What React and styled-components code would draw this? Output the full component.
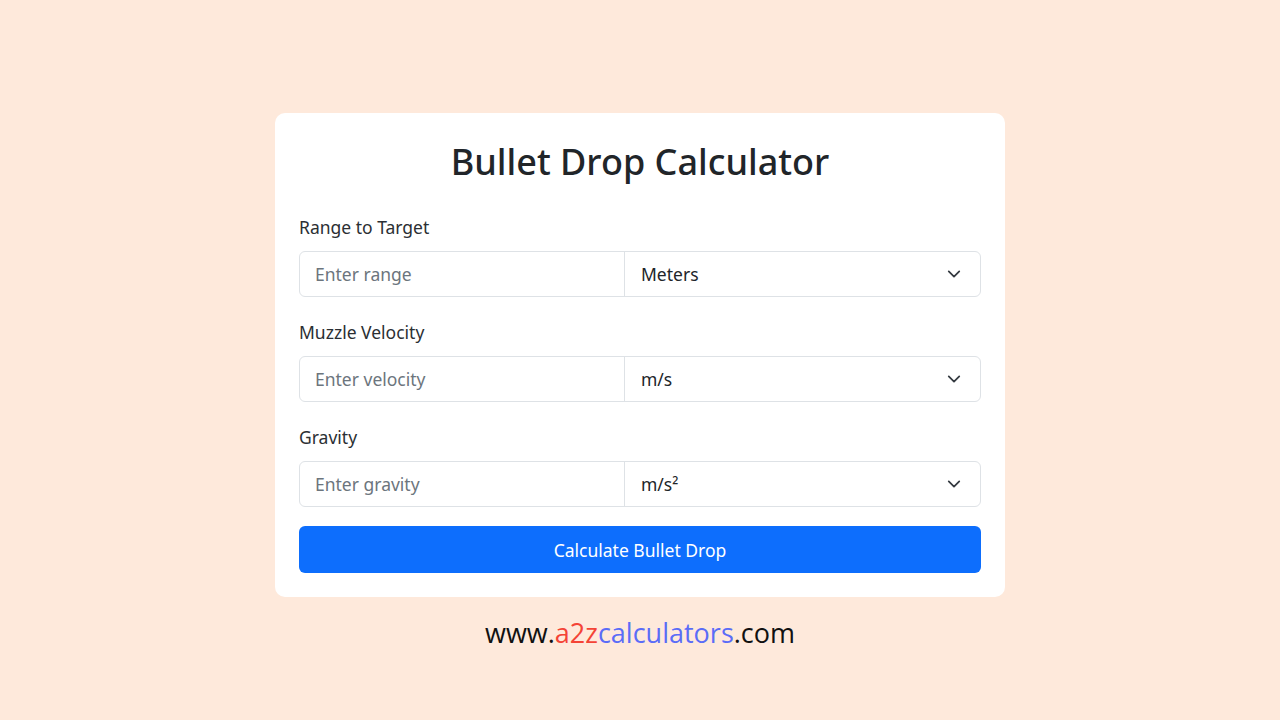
import React from 'react';
import styled, { createGlobalStyle } from 'styled-components';

const GlobalStyle = createGlobalStyle`
  * { box-sizing: border-box; }
  body {
    margin: 0;
    background: #fee9db;
    font-family: "Noto Sans", "Open Sans", sans-serif;
    color: #212529;
  }
`;

const fields = [
  { label: 'Range to Target', placeholder: 'Enter range', unit: 'Meters' },
  { label: 'Muzzle Velocity', placeholder: 'Enter velocity', unit: 'm/s' },
  { label: 'Gravity', placeholder: 'Enter gravity', unit: 'm/s²' },
];

const Chevron = () => (
  <svg width="14" height="14" viewBox="0 0 16 16" fill="none">
    <path d="M2 5l6 6 6-6" stroke="#343a40" strokeWidth="2" strokeLinecap="round" strokeLinejoin="round" />
  </svg>
);

const App = () => {
  return (
    <Page>
      <GlobalStyle />
      <Card>
        <Heading>Bullet Drop Calculator</Heading>
        {fields.map((item, index) => (
          <Field key={index}>
            <Label>{item.label}</Label>
            <Group>
              <Input placeholder={item.placeholder} />
              <Select>
                <span>{item.unit}</span>
                <Chevron />
              </Select>
            </Group>
          </Field>
        ))}
        <Button>Calculate Bullet Drop</Button>
      </Card>
      <Footer>
        www.<Red>a2z</Red><Blue>calculators</Blue>.com
      </Footer>
    </Page>
  );
};

export default App;

const Page = styled.div`
  width: 100%;
  height: 720px;
  display: flex;
  flex-direction: column;
  align-items: center;
  padding-top: 113px;
`;

const Card = styled.div`
  width: 730px;
  background: #fff;
  border-radius: 10px;
  padding: 24px;
  display: flex;
  flex-direction: column;
`;

const Heading = styled.h2`
  margin: 2px 0 29px;
  text-align: center;
  font-size: 36px;
  font-weight: 500;
  line-height: 46px;
  color: #212529;
`;

const Field = styled.div`
  margin-bottom: 22px;
`;

const Label = styled.div`
  font-size: 17.5px;
  line-height: 27px;
  margin-bottom: 10px;
  color: #2b2f33;
`;

const Group = styled.div`
  display: flex;
  height: 46px;
  border: 1px solid #dee2e6;
  border-radius: 6px;
`;

const Input = styled.input`
  width: 325px;
  border: none;
  border-right: 1px solid #dee2e6;
  border-radius: 6px 0 0 6px;
  padding: 0 15px;
  font-family: inherit;
  font-size: 17.5px;
  color: #212529;
  outline: none;
  background: transparent;
  &::placeholder { color: #6c757d; }
`;

const Select = styled.div`
  flex: 1;
  display: flex;
  align-items: center;
  justify-content: space-between;
  padding: 0 19px 0 16px;
  font-size: 17.5px;
  color: #212529;
`;

const Button = styled.button`
  height: 47px;
  border: none;
  border-radius: 6px;
  background: #0d6efd;
  color: #fff;
  font-family: inherit;
  font-size: 17.5px;
  margin-top: -3px;
`;

const Footer = styled.div`
  margin-top: 17px;
  font-family: "Open Sans", sans-serif;
  font-size: 27px;
  color: #111;
`;

const Red = styled.span`
  color: #f44336;
`;

const Blue = styled.span`
  color: #5b6cf7;
`;
